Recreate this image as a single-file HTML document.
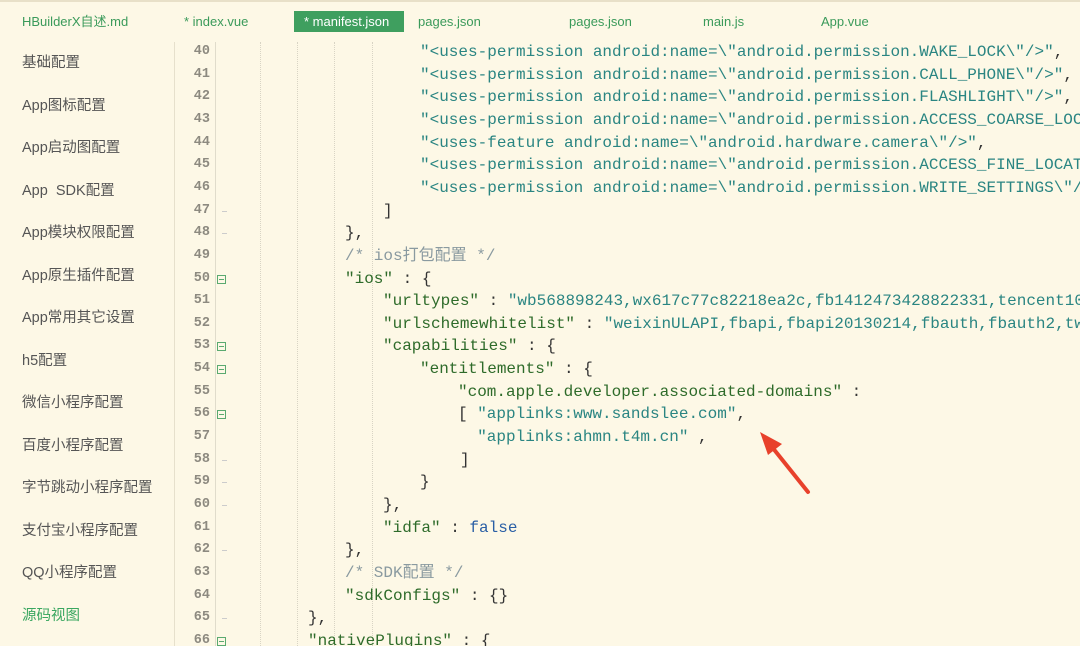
<!DOCTYPE html>
<html><head><meta charset="utf-8"><style>
*{margin:0;padding:0;box-sizing:border-box}
html,body{width:1080px;height:646px;overflow:hidden}
body{background:#fdf8e6;font-family:"Liberation Sans","Noto Sans CJK SC",sans-serif;position:relative}
#wrap{position:absolute;left:0;top:0;width:1080px;height:646px;overflow:hidden}
.tab{position:absolute;top:11px;height:21px;line-height:21px;font-size:13px;color:#3a9a5a}
.act{background:#3f9f5f;color:#fff;padding-left:10px}
.side{position:absolute;left:22px;font-size:14.5px;color:#555;line-height:20px}
.ln{position:absolute;left:170px;width:40px;text-align:right;font-family:"Liberation Mono",monospace;font-size:13.5px;color:#8d8a80;line-height:20px;font-weight:bold}
.fold{position:absolute;left:217px;width:9px;height:9px;border:1px solid #5aaa70}
.fold:after{content:"";position:absolute;left:1px;top:3px;width:5px;height:1px;background:#5aaa70}
.tick{position:absolute;left:222px;width:5px;height:1px;background:#ccc}
.c{position:absolute;font-family:"Liberation Mono","Noto Sans CJK SC",monospace;font-size:16px;line-height:20px;white-space:pre;color:#333}
.k{color:#2e6b2a}.s{color:#2a8582}.m{color:#8a9aa0}.b{color:#2a5fa5}
.g{position:absolute;top:42px;bottom:0;width:0;border-left:1px dotted #d8d4c4}
</style></head><body><div id="wrap">
<div style="position:absolute;left:0;top:0;width:1080px;height:2px;background:#e8e0c8"></div>
<div class="tab" style="left:22px">HBuilderX自述.md</div>
<div class="tab" style="left:184px">* index.vue</div>
<div class="tab act" style="left:294px;width:110px;padding-left:10px">* manifest.json</div>
<div class="tab" style="left:418px">pages.json</div>
<div class="tab" style="left:569px">pages.json</div>
<div class="tab" style="left:703px">main.js</div>
<div class="tab" style="left:821px">App.vue</div>

<div style="position:absolute;left:174px;top:42px;bottom:0;width:1px;background:#e6e0cc"></div>
<div style="position:absolute;left:215px;top:42px;bottom:0;width:1px;background:#e0dccb"></div>
<div class="g" style="left:260px"></div><div class="g" style="left:297px"></div><div class="g" style="left:334px"></div><div class="g" style="left:372px"></div>

<div class="side" style="top:53px">基础配置</div>
<div class="side" style="top:96px">App图标配置</div>
<div class="side" style="top:138px">App启动图配置</div>
<div class="side" style="top:181px">App &nbsp;SDK配置</div>
<div class="side" style="top:223px">App模块权限配置</div>
<div class="side" style="top:266px">App原生插件配置</div>
<div class="side" style="top:308px">App常用其它设置</div>
<div class="side" style="top:351px">h5配置</div>
<div class="side" style="top:393px">微信小程序配置</div>
<div class="side" style="top:436px">百度小程序配置</div>
<div class="side" style="top:478px">字节跳动小程序配置</div>
<div class="side" style="top:521px">支付宝小程序配置</div>
<div class="side" style="top:563px">QQ小程序配置</div>
<div class="side" style="top:606px;color:#3aa760">源码视图</div>

<div id="code"></div>
<svg style="position:absolute;left:0;top:0" width="1080" height="646">
<line x1="808" y1="492" x2="772" y2="447" stroke="#e8412b" stroke-width="4" stroke-linecap="round"/>
<polygon points="760,432 782,444 768,455" fill="#e8412b"/>
</svg>
</div>
<script>
var L=[308,345,383,420,458];
var rows=[
[4,'<span class="s">"&lt;uses-permission android:name=\\"android.permission.WAKE_LOCK\\"/&gt;"</span>,'],
[4,'<span class="s">"&lt;uses-permission android:name=\\"android.permission.CALL_PHONE\\"/&gt;"</span>,'],
[4,'<span class="s">"&lt;uses-permission android:name=\\"android.permission.FLASHLIGHT\\"/&gt;"</span>,'],
[4,'<span class="s">"&lt;uses-permission android:name=\\"android.permission.ACCESS_COARSE_LOCATION\\"/&gt;"</span>,'],
[4,'<span class="s">"&lt;uses-feature android:name=\\"android.hardware.camera\\"/&gt;"</span>,'],
[4,'<span class="s">"&lt;uses-permission android:name=\\"android.permission.ACCESS_FINE_LOCATION\\"/&gt;"</span>,'],
[4,'<span class="s">"&lt;uses-permission android:name=\\"android.permission.WRITE_SETTINGS\\"/&gt;"</span>,'],
[3,']','t'],
[2,'},','t'],
[2,'<span class="m">/* ios打包配置 */</span>'],
[2,'<span class="k">"ios"</span> : {','f'],
[3,'<span class="k">"urltypes"</span> : <span class="s">"wb568898243,wx617c77c82218ea2c,fb1412473428822331,tencent100000000"</span>'],
[3,'<span class="k">"urlschemewhitelist"</span> : <span class="s">"weixinULAPI,fbapi,fbapi20130214,fbauth,fbauth2,twitter"</span>'],
[3,'<span class="k">"capabilities"</span> : {','f'],
[4,'<span class="k">"entitlements"</span> : {','f'],
[5,'<span class="k">"com.apple.developer.associated-domains"</span> :'],
[5,'[ <span class="s">"applinks:www.sandslee.com"</span>,','f'],
[5,'  <span class="s">"applinks:ahmn.t4m.cn"</span> ,'],
[5,']','t'],
[4,'}','t'],
[3,'},','t'],
[3,'<span class="k">"idfa"</span> : <span class="b">false</span>'],
[2,'},','t'],
[2,'<span class="m">/* SDK配置 */</span>'],
[2,'<span class="k">"sdkConfigs"</span> : {}'],
[1,'},','t'],
[1,'<span class="k">"nativePlugins"</span> : {','f']
];
var h='';
rows.forEach(function(r,i){
 var y=42+i*22.65;
 h+='<div class="ln" style="top:'+y+'px">'+(40+i)+'</div>';
 if(r[2]=='f')h+='<div class="fold" style="top:'+(y+6)+'px"></div>';
 if(r[2]=='t')h+='<div class="tick" style="top:'+(y+10)+'px"></div>';
 h+='<div class="c" style="left:'+(L[r[0]-1]+(r[0]==5&&i==18?2:0))+'px;top:'+y+'px">'+r[1]+'</div>';
});
document.getElementById('code').innerHTML=h;
</script>
</body></html>
